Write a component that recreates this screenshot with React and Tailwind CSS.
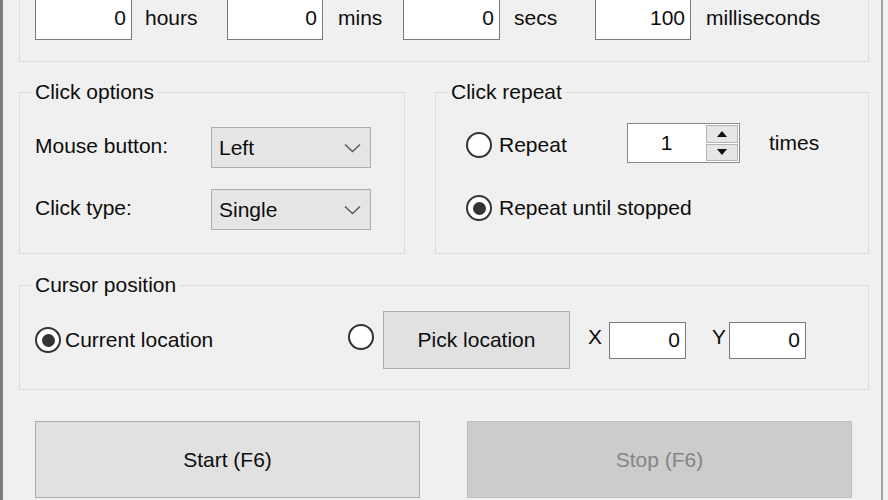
import React from "react";

function Radio({ checked }) {
  return (
    <span className="flex h-[26px] w-[26px] shrink-0 items-center justify-center rounded-full border-2 border-[#333333] bg-white">
      {checked && <span className="h-[13px] w-[13px] rounded-full bg-[#333333]" />}
    </span>
  );
}

function NumBox({ value, className }) {
  return (
    <div className={"flex items-center justify-end border border-[#7a7a7a] bg-white pr-[5px] " + className}>
      {value}
    </div>
  );
}

function Combo({ value }) {
  return (
    <div className="flex h-[41px] w-[160px] items-center justify-between border border-[#adadad] bg-[#e5e5e5] pl-[7px] pr-[9px]">
      <span>{value}</span>
      <svg width="17" height="10" viewBox="0 0 17 10">
        <polyline points="1,1.5 8.5,8.5 16,1.5" fill="none" stroke="#5a5a5a" strokeWidth="1.5" />
      </svg>
    </div>
  );
}

function Spinner({ value }) {
  return (
    <div className="flex h-[40px] w-[113px] border border-[#8a8a8a] bg-white">
      <div className="flex flex-1 items-center justify-center">{value}</div>
      <div className="flex w-[34px] flex-col gap-[1px] p-[1px]">
        <div className="flex flex-1 items-center justify-center border border-[#b5b5b5] bg-[#e6e6e6]">
          <svg width="10" height="6" viewBox="0 0 10 6">
            <polygon points="5,0 10,6 0,6" fill="#111" />
          </svg>
        </div>
        <div className="flex flex-1 items-center justify-center border border-[#b5b5b5] bg-[#e6e6e6]">
          <svg width="10" height="6" viewBox="0 0 10 6">
            <polygon points="0,0 10,0 5,6" fill="#111" />
          </svg>
        </div>
      </div>
    </div>
  );
}

function Group({ title, className, children }) {
  return (
    <fieldset className={"border border-[#dcdcdc] " + className}>
      <legend className="ml-[12px] px-[3px] leading-[24px]">{title}</legend>
      {children}
    </fieldset>
  );
}

export default function App() {
  return (
    <div className="flex h-[500px] w-[888px] overflow-hidden bg-[#f0f0f0] font-['Liberation_Sans',Arial,sans-serif] text-[21px] leading-[24px] text-[#0d0d0d]">
      <div className="w-[3px] shrink-0 bg-[#7d7d7d]" />
      <div className="flex w-[878px] shrink-0 flex-col pl-[16px]">
        {/* interval group (top cut off) */}
        <div className="-mt-[20px] w-[850px] border border-[#dcdcdc] pl-[15px] pt-[18px] pb-[21px]">
          <div className="flex items-center">
            <NumBox value="0" className="h-[41px] w-[97px] pb-[3px]" />
            <span className="w-[95px] pl-[13px] -mt-[3px]">hours</span>
            <NumBox value="0" className="h-[41px] w-[96px] pb-[3px]" />
            <span className="w-[80px] pl-[15px] -mt-[3px]">mins</span>
            <NumBox value="0" className="h-[41px] w-[97px] pb-[3px]" />
            <span className="w-[95px] pl-[14px] -mt-[3px]">secs</span>
            <NumBox value="100" className="h-[41px] w-[96px] pb-[3px]" />
            <span className="pl-[15px] -mt-[3px]">milliseconds</span>
          </div>
        </div>

        <div className="mt-[18px] flex gap-[30px]">
          <Group title="Click options" className="w-[386px]">
            <div className="flex flex-col gap-[21px] pl-[15px] pt-[23px] pb-[23px]">
              <div className="flex items-center">
                <span className="w-[176px] -mt-[3px]">Mouse button:</span>
                <Combo value="Left" />
              </div>
              <div className="flex items-center">
                <span className="w-[176px] -mt-[3px]">Click type:</span>
                <Combo value="Single" />
              </div>
            </div>
          </Group>
          <Group title="Click repeat" className="w-[434px]">
            <div className="flex flex-col gap-[32px] pl-[30px] pt-[19px]">
              <div className="flex items-center">
                <div className="flex w-[161px] items-center gap-[7px] pt-[3px]">
                  <Radio />
                  <span>Repeat</span>
                </div>
                <Spinner value="1" />
                <span className="ml-[29px]">times</span>
              </div>
              <div className="flex items-center gap-[7px]">
                <Radio checked />
                <span>Repeat until stopped</span>
              </div>
            </div>
          </Group>
        </div>

        <Group title="Cursor position" className="mt-[19px] w-[850px]">
          <div className="flex items-center pl-[15px] pt-[14px] pb-[20px]">
            <div className="flex w-[313px] items-center gap-[4px]">
              <Radio checked />
              <span>Current location</span>
            </div>
            <div className="-mt-[6px]">
              <Radio />
            </div>
            <div className="ml-[9px] flex h-[58px] w-[187px] items-center justify-center border border-[#adadad] bg-[#e1e1e1]">
              Pick location
            </div>
            <span className="ml-[18px] -mt-[6px]">X</span>
            <NumBox value="0" className="ml-[7px] h-[37px] w-[77px]" />
            <span className="ml-[26px] -mt-[6px]">Y</span>
            <NumBox value="0" className="ml-[3px] h-[37px] w-[77px]" />
          </div>
        </Group>

        <div className="mt-[31px] flex gap-[47px] pl-[16px]">
          <div className="flex h-[77px] w-[385px] items-center justify-center border border-[#adadad] bg-[#e1e1e1]">
            Start (F6)
          </div>
          <div className="flex h-[77px] w-[385px] items-center justify-center border border-[#bfbfbf] bg-[#cccccc] text-[#858585]">
            Stop (F6)
          </div>
        </div>
      </div>
      <div className="w-[2px] shrink-0 bg-[#a3a3a3]" />
    </div>
  );
}
